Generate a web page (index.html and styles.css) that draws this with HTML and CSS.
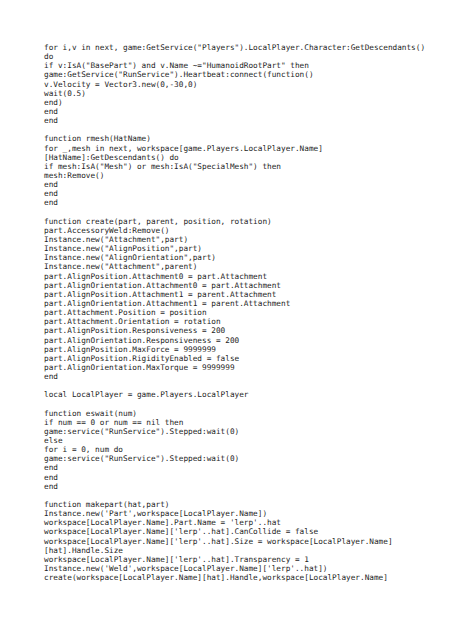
FILE: index.html
```html
<!DOCTYPE html>
<html>
<head>
<meta charset="utf-8">
<link rel="stylesheet" href="styles.css">
</head>
<body>
<main class="page">
<pre class="code">for i,v in next, game:GetService("Players").LocalPlayer.Character:GetDescendants()
do
if v:IsA("BasePart") and v.Name ~="HumanoidRootPart" then
game:GetService("RunService").Heartbeat:connect(function()
v.Velocity = Vector3.new(0,-30,0)
wait(0.5)
end)
end
end

function rmesh(HatName)
for _,mesh in next, workspace[game.Players.LocalPlayer.Name]
[HatName]:GetDescendants() do
if mesh:IsA("Mesh") or mesh:IsA("SpecialMesh") then
mesh:Remove()
end
end
end

function create(part, parent, position, rotation)
part.AccessoryWeld:Remove()
Instance.new("Attachment",part)
Instance.new("AlignPosition",part)
Instance.new("AlignOrientation",part)
Instance.new("Attachment",parent)
part.AlignPosition.Attachment0 = part.Attachment
part.AlignOrientation.Attachment0 = part.Attachment
part.AlignPosition.Attachment1 = parent.Attachment
part.AlignOrientation.Attachment1 = parent.Attachment
part.Attachment.Position = position
part.Attachment.Orientation = rotation
part.AlignPosition.Responsiveness = 200
part.AlignOrientation.Responsiveness = 200
part.AlignPosition.MaxForce = 9999999
part.AlignPosition.RigidityEnabled = false
part.AlignOrientation.MaxTorque = 9999999
end

local LocalPlayer = game.Players.LocalPlayer

function eswait(num)
if num == 0 or num == nil then
game:service("RunService").Stepped:wait(0)
else
for i = 0, num do
game:service("RunService").Stepped:wait(0)
end
end
end

function makepart(hat,part)
Instance.new('Part',workspace[LocalPlayer.Name])
workspace[LocalPlayer.Name].Part.Name = 'lerp'..hat
workspace[LocalPlayer.Name]['lerp'..hat].CanCollide = false
workspace[LocalPlayer.Name]['lerp'..hat].Size = workspace[LocalPlayer.Name]
[hat].Handle.Size
workspace[LocalPlayer.Name]['lerp'..hat].Transparency = 1
Instance.new('Weld',workspace[LocalPlayer.Name]['lerp'..hat])
create(workspace[LocalPlayer.Name][hat].Handle,workspace[LocalPlayer.Name]</pre>
</main>
</body>
</html>
```
FILE: styles.css
```css
html, body {
  margin: 0;
  padding: 0;
  background: #ffffff;
}
.page {
  width: 474px;
  height: 632px;
  box-sizing: border-box;
  padding: 43px 0 0 44px;
  overflow: hidden;
}
.code {
  margin: 0;
  font-family: "DejaVu Sans Mono", monospace;
  font-size: 7.72px;
  line-height: 9.14px;
  color: #1e1e1e;
  white-space: pre;
}
```
